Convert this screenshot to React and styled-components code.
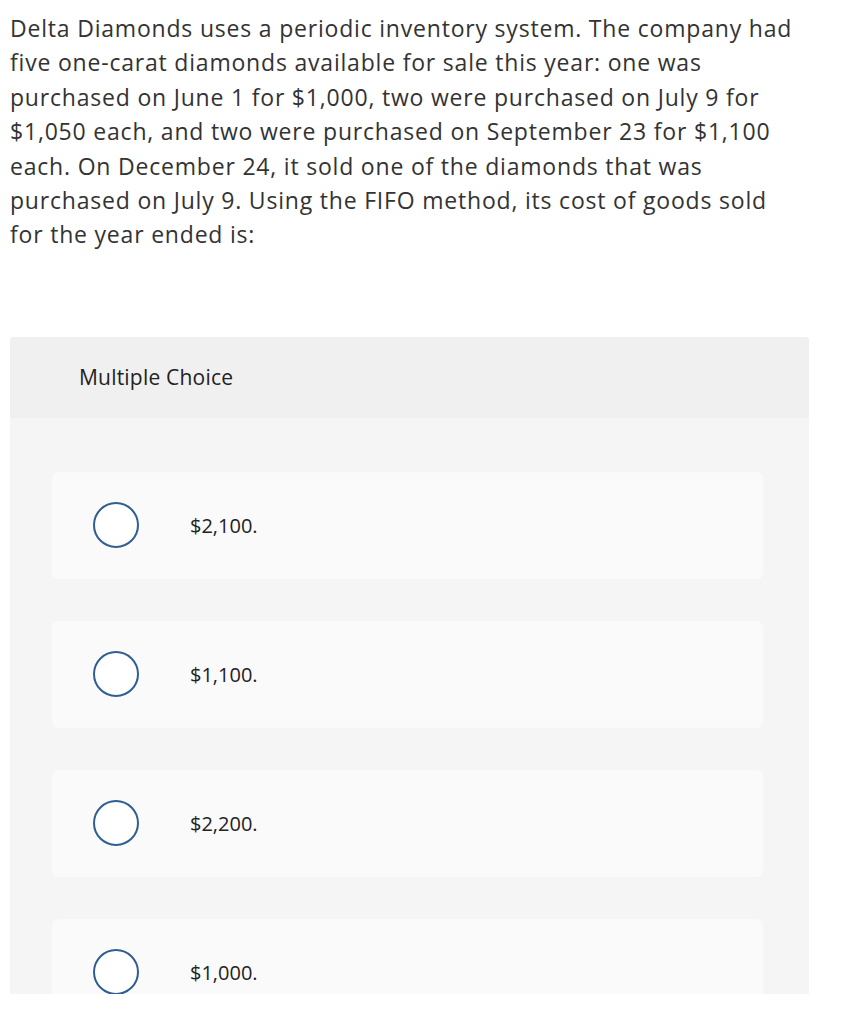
import styled, { createGlobalStyle } from "styled-components";

const GlobalStyle = createGlobalStyle`
    * {
        box-sizing: border-box;
    }
    body {
        margin: 0;
        background-color: #FFF;
        font-family: "Open Sans", "Noto Sans", sans-serif;
        color: #333;
    }
`;

const lines = [
    "Delta Diamonds uses a periodic inventory system. The company had",
    "five one-carat diamonds available for sale this year: one was",
    "purchased on June 1 for $1,000, two were purchased on July 9 for",
    "$1,050 each, and two were purchased on September 23 for $1,100",
    "each. On December 24, it sold one of the diamonds that was",
    "purchased on July 9. Using the FIFO method, its cost of goods sold",
    "for the year ended is:",
];

const choices = ["$2,100.", "$1,100.", "$2,200.", "$1,000."];

export default function App(){
    return(
        <Page>
            <GlobalStyle />
            <Question>
                {lines.map((line) => (
                    <Line key={line}>{line}</Line>
                ))}
            </Question>
            <Card>
                <CardHeader>
                    <HeaderTitle>Multiple Choice</HeaderTitle>
                </CardHeader>
                <CardBody>
                    {choices.map((choice) => (
                        <Option key={choice}>
                            <Radio />
                            <OptionLabel>{choice}</OptionLabel>
                        </Option>
                    ))}
                </CardBody>
            </Card>
        </Page>
    );
}

const Page = styled.div`
    padding: 11px 0 0 10px;
    width: 845px;
    height: 1024px;
    overflow: hidden;
`;

const Question = styled.div`
    font-size: 23px;
    line-height: 34.4px;
    letter-spacing: 0.8px;
    color: #333;
`;

const Line = styled.div`
    white-space: nowrap;
`;

const Card = styled.div`
    margin-top: 85px;
    width: 799px;
    height: 657px;
    border-radius: 4px 4px 0 0;
    overflow: hidden;
    background-color: #F5F5F5;
`;

const CardHeader = styled.div`
    display: flex;
    align-items: center;
    height: 81px;
    padding: 0 0 0 69px;
    background-color: #F0F0F0;
`;

const HeaderTitle = styled.p`
    margin: 0;
    font-size: 21px;
    letter-spacing: 0.2px;
    color: #222;
`;

const CardBody = styled.div`
    display: flex;
    flex-direction: column;
    gap: 42px;
    padding: 54px 46px 0 42px;
`;

const Option = styled.div`
    display: flex;
    align-items: center;
    flex-shrink: 0;
    height: 107px;
    padding: 0 0 0 41px;
    border-radius: 6px;
    background-color: #FAFAFA;
`;

const Radio = styled.span`
    width: 46px;
    height: 46px;
    flex-shrink: 0;
    border-radius: 50%;
    border: 2px solid #2F5E93;
    background-color: #FFF;
`;

const OptionLabel = styled.span`
    margin-left: 51px;
    font-size: 20px;
    color: #222;
`;
